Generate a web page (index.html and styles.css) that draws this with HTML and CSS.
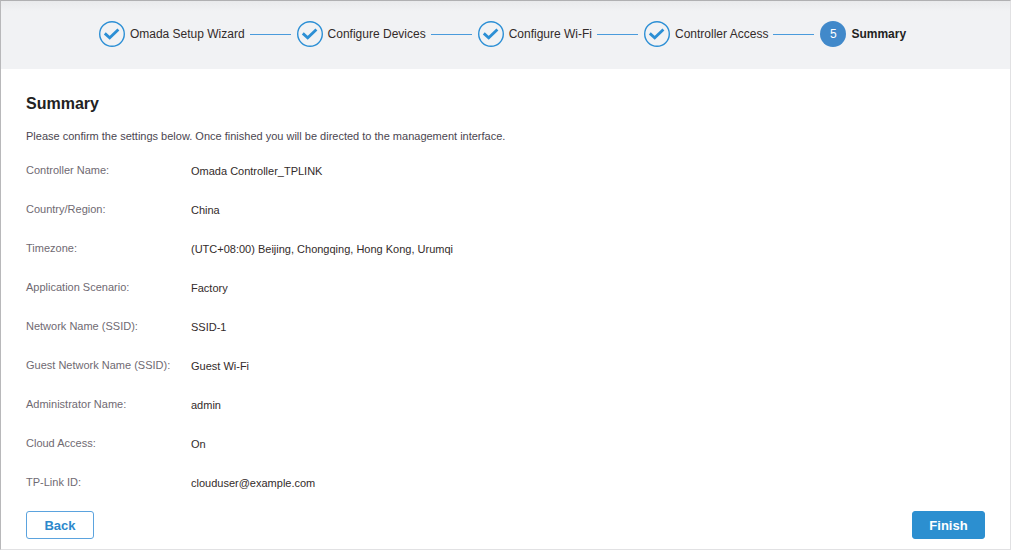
FILE: index.html
```html
<!DOCTYPE html>
<html lang="en">
<head>
<meta charset="utf-8">
<title>Omada Setup Wizard</title>
<link rel="stylesheet" href="styles.css">
</head>
<body>
<div class="wizard">
  <header class="wizard-header">
    <ol class="steps">
      <li class="step"><svg class="step-icon" viewBox="0 0 26 26" aria-hidden="true"><circle cx="13" cy="13" r="12.3"/><path d="M5.8 12.4l4.9 4.4 8.7-8.3"/></svg><span>Omada Setup Wizard</span></li>
      <li class="step"><svg class="step-icon" viewBox="0 0 26 26" aria-hidden="true"><circle cx="13" cy="13" r="12.3"/><path d="M5.8 12.4l4.9 4.4 8.7-8.3"/></svg><span>Configure Devices</span></li>
      <li class="step"><svg class="step-icon" viewBox="0 0 26 26" aria-hidden="true"><circle cx="13" cy="13" r="12.3"/><path d="M5.8 12.4l4.9 4.4 8.7-8.3"/></svg><span>Configure Wi-Fi</span></li>
      <li class="step"><svg class="step-icon" viewBox="0 0 26 26" aria-hidden="true"><circle cx="13" cy="13" r="12.3"/><path d="M5.8 12.4l4.9 4.4 8.7-8.3"/></svg><span>Controller Access</span></li>
      <li class="step step-current" aria-current="step"><span class="step-number">5</span><span>Summary</span></li>
    </ol>
  </header>
  <main class="content">
    <h1 class="title">Summary</h1>
    <p class="intro">Please confirm the settings below. Once finished you will be directed to the management interface.</p>
    <dl class="settings">
      <dt>Controller Name:</dt><dd>Omada Controller_TPLINK</dd>
      <dt>Country/Region:</dt><dd>China</dd>
      <dt>Timezone:</dt><dd>(UTC+08:00) Beijing, Chongqing, Hong Kong, Urumqi</dd>
      <dt>Application Scenario:</dt><dd>Factory</dd>
      <dt>Network Name (SSID):</dt><dd>SSID-1</dd>
      <dt>Guest Network Name (SSID):</dt><dd>Guest Wi-Fi</dd>
      <dt>Administrator Name:</dt><dd>admin</dd>
      <dt>Cloud Access:</dt><dd>On</dd>
      <dt>TP-Link ID:</dt><dd>clouduser@example.com</dd>
    </dl>
    <div class="actions">
      <button class="button button-back" type="button">Back</button>
      <button class="button button-finish" type="button">Finish</button>
    </div>
  </main>
</div>
</body>
</html>
```
FILE: styles.css
```css
* {
  box-sizing: border-box;
}

body {
  margin: 0;
  background: #fff;
  font-family: "Liberation Sans", Arial, sans-serif;
  font-size: 11px;
  line-height: 16px;
  color: #332b2a;
}

.wizard {
  min-height: 100vh;
  border: 1px solid #e1e1e3;
  border-top-color: #b0b0b2;
  border-left-color: #b8b8ba;
}

.wizard-header {
  padding: 20px 0 22px;
  background: linear-gradient(#e9eaec, #f1f2f4 10px);
}

.steps {
  display: flex;
  justify-content: center;
  align-items: center;
  margin: 0;
  padding: 0 6px 0 0;
  list-style: none;
  font-size: 12px;
}

.step {
  display: flex;
  align-items: center;
  gap: 5px;
  white-space: nowrap;
}

.step + .step::before {
  content: "";
  width: 41px;
  height: 1px;
  margin-right: 1px;
  background: #4a9bdc;
}

.step:not(:last-child) {
  margin-right: 5px;
}

.step-icon {
  width: 26px;
  height: 26px;
  fill: none;
  stroke: #2c8fd5;
}

.step-icon circle {
  stroke-width: 1.4;
}

.step-icon path {
  stroke-width: 2.8;
}

.step-number {
  width: 26px;
  border-radius: 50%;
  background: #4189ca;
  color: #fff;
  line-height: 26px;
  font-weight: normal;
  text-align: center;
}

.step-current {
  font-weight: bold;
  color: #222;
}

.content {
  padding: 25px 25px 10px;
}

.title {
  margin: 0;
  font-size: 16px;
  line-height: 20px;
  color: #222;
}

.intro {
  margin: 14px 0 7px;
  color: #4b4650;
}

.settings {
  display: grid;
  grid-template-columns: 165px 1fr;
  grid-auto-rows: 39px;
  align-items: center;
  margin: 0;
}

.settings dt {
  padding-bottom: 2px;
  color: #6f6a72;
}

.settings dd {
  margin: 0;
}

.actions {
  display: flex;
  justify-content: space-between;
  margin-top: 9px;
}

.button {
  height: 28px;
  padding: 0 16px;
  border: 1px solid #5ba3de;
  border-radius: 3px;
  background: #fff;
  color: #2c88cc;
  font: bold 13px "Liberation Sans", Arial, sans-serif;
}

.button-back {
  min-width: 68px;
}

.button-finish {
  min-width: 73px;
  border-color: #2c8fd0;
  background: #2c8fd0;
  color: #fff;
}
```
